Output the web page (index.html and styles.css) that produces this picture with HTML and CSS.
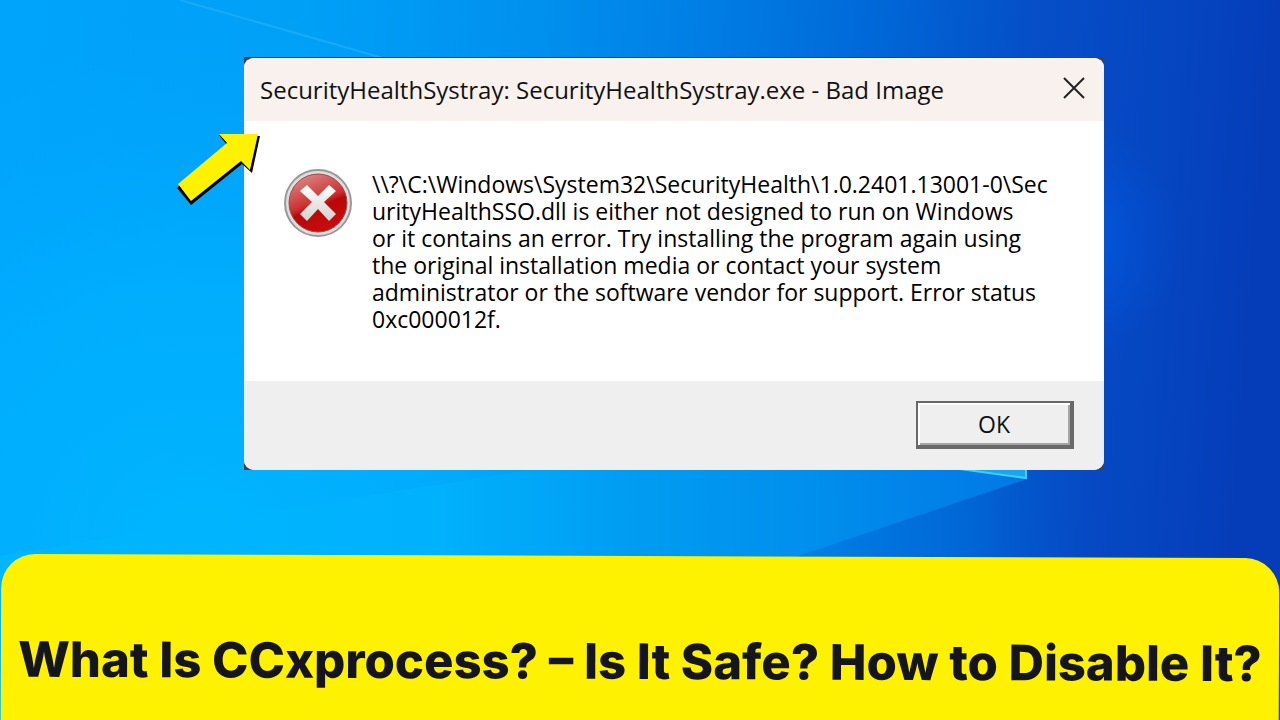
FILE: index.html
```html
<!DOCTYPE html>
<html lang="en">
<head>
    <meta charset="UTF-8">
    <meta name="viewport" content="width=device-width, initial-scale=1.0">
    <title>What Is CCxprocess?</title>
    <link rel="stylesheet" href="styles.css">
</head>
<body>
    <!-- Desktop wallpaper -->
    <svg class="wallpaper" viewBox="0 0 1280 720" preserveAspectRatio="none" aria-hidden="true">
        <defs>
            <linearGradient id="sky" gradientUnits="userSpaceOnUse" x1="0" y1="0" x2="1280" y2="100">
                <stop offset="0" stop-color="#00a4fb"/>
                <stop offset="0.24" stop-color="#00a0f7"/>
                <stop offset="0.42" stop-color="#0090ee"/>
                <stop offset="0.56" stop-color="#007ce4"/>
                <stop offset="0.68" stop-color="#0068d8"/>
                <stop offset="0.8" stop-color="#054fc8"/>
                <stop offset="0.92" stop-color="#0545c0"/>
                <stop offset="1" stop-color="#053cb8"/>
            </linearGradient>
            <radialGradient id="glow" gradientUnits="userSpaceOnUse" cx="200" cy="560" r="540">
                <stop offset="0" stop-color="#00b6ff"/>
                <stop offset="0.5" stop-color="#00b0ff" stop-opacity="0.8"/>
                <stop offset="1" stop-color="#00a8ff" stop-opacity="0"/>
            </radialGradient>
            <linearGradient id="beam" gradientUnits="userSpaceOnUse" x1="0" y1="0" x2="1027" y2="0">
                <stop offset="0" stop-color="#00b6ff"/>
                <stop offset="0.42" stop-color="#00b2fd"/>
                <stop offset="0.62" stop-color="#009cf2"/>
                <stop offset="0.8" stop-color="#008eec"/>
                <stop offset="1" stop-color="#0078e6"/>
            </linearGradient>
            <linearGradient id="shade" gradientUnits="userSpaceOnUse" x1="780" y1="0" x2="1160" y2="0">
                <stop offset="0" stop-color="#0084e8"/>
                <stop offset="0.5" stop-color="#0066d6"/>
                <stop offset="0.85" stop-color="#0550c8" stop-opacity="0"/>
            </linearGradient>
            <radialGradient id="light" gradientUnits="userSpaceOnUse" cx="1050" cy="240" r="130">
                <stop offset="0" stop-color="#0062ee"/>
                <stop offset="1" stop-color="#0055dd" stop-opacity="0"/>
            </radialGradient>
        </defs>
        <rect width="1280" height="720" fill="url(#sky)"/>
        <rect width="1280" height="720" fill="url(#glow)"/>
        <rect width="1280" height="720" fill="url(#light)"/>
        <path d="M780 460 L1160 460 L1160 720 L780 720 Z" fill="url(#shade)"/>
        <path d="M0 556 L590 460 L1027 460 L1027 479 L780 562 L780 720 L0 720 Z" fill="url(#beam)"/>
        <path d="M180 0 L390 60" stroke="#3fb8ff" stroke-opacity="0.4" stroke-width="2" fill="none"/>
        <path d="M960 469 L1026 478 V469" fill="#17a5f5" stroke="#3fd0ff" stroke-width="2"/>
    </svg>

    <main class="desktop">
        <div class="dialog-frame">
            <section class="dialog" role="alertdialog" aria-labelledby="title" aria-describedby="message">
                <header class="titlebar">
                    <h1 id="title">SecurityHealthSystray: SecurityHealthSystray.exe - Bad Image</h1>
                    <button type="button" class="close" aria-label="Close">
                        <svg width="24" height="24" viewBox="0 0 24 24"><path d="M2 2 L22 22 M22 2 L2 22" stroke="#222" stroke-width="2" fill="none"/></svg>
                    </button>
                </header>
                <div class="content">
                    <svg class="error-icon" width="68" height="68" viewBox="0 0 68 68" aria-hidden="true">
                        <defs>
                            <linearGradient id="red" x1="0.2" y1="0" x2="0.6" y2="1">
                                <stop offset="0" stop-color="#e08a8a"/>
                                <stop offset="0.5" stop-color="#cc3030"/>
                                <stop offset="0.6" stop-color="#b80808"/>
                                <stop offset="1" stop-color="#c80c0c"/>
                            </linearGradient>
                            <linearGradient id="cross" x1="0" y1="0" x2="0" y2="1">
                                <stop offset="0" stop-color="#ffffff"/>
                                <stop offset="1" stop-color="#d2d2d2"/>
                            </linearGradient>
                        </defs>
                        <circle cx="34" cy="34" r="33" fill="#dedede" stroke="#999" stroke-width="2"/>
                        <circle cx="34" cy="34" r="29" fill="url(#red)" stroke="#9c4a4a" stroke-width="1"/>
                        <path d="M23 16 L34 27 L45 16 L52 22 L40 33 L52 45 L45 52 L34 40 L23 52 L16 45 L28 33 L16 22 Z" fill="url(#cross)"/>
                    </svg>
                    <p id="message">\\?\C:\Windows\System32\SecurityHealth\1.0.2401.13001-0\Sec<br>urityHealthSSO.dll is either not designed to run on Windows<br>or it contains an error. Try installing the program again using<br>the original installation media or contact your system<br>administrator or the software vendor for support. Error status<br>0xc000012f.</p>
                </div>
                <footer class="actions">
                    <button type="button" class="ok">OK</button>
                </footer>
            </section>
            <!-- Arrow pointing at the dialog title -->
            <svg class="arrow" width="90" height="80" viewBox="0 0 90 80" aria-hidden="true">
                <path d="M45 7 L86 8 L78 45 L68 36 L17 77 L3 60 L53 17 Z" fill="#000"/>
                <path d="M45 6 L84 6 L76 42 L67 33 L17 73 L4 56 L53 15 Z" fill="#fff200"/>
            </svg>
        </div>
    </main>

    <div class="banner">
        <h2>What Is CCxprocess? – Is It Safe? How to Disable It?</h2>
    </div>
</body>
</html>
```
FILE: styles.css
```css
body {
    display: flex;
    flex-direction: column;
    min-height: 100vh;
    margin: 0;
    overflow: hidden;
    background-color: #0088ee;
    font-family: "Open Sans", "Noto Sans", sans-serif;
    color: #111;
}
h1, h2, p {
    margin: 0;
}
.wallpaper {
    position: absolute;
    z-index: -1;
    width: 100%;
    height: 100%;
}
.desktop {
    flex: 1;
    padding: 57px 176px 85px 244px;
}
.dialog-frame {
    position: relative;
    background-color: #40404a;
}
.dialog {
    overflow: hidden;
    border-top: 1px solid #40404a;
    border-radius: 10px;
    background-color: #fff;
}
.titlebar {
    display: flex;
    align-items: center;
    justify-content: space-between;
    height: 63px;
    padding: 0 16px;
    background-color: #f9f1ed;
}
.titlebar h1 {
    font-size: 24px;
    font-weight: 400;
    white-space: nowrap;
}
.close {
    display: flex;
    padding: 0 2px 4px;
    border: none;
    background: none;
    cursor: pointer;
}
.content {
    display: flex;
    align-items: flex-start;
    gap: 20px;
    padding: 48px 40px;
}
.error-icon {
    flex: none;
}
.content p {
    padding-top: 2px;
    font-size: 23px;
    line-height: 27px;
    white-space: nowrap;
    color: #000;
}
.actions {
    display: flex;
    justify-content: flex-end;
    padding: 20px 30px 21px;
    background-color: #efefef;
}
.ok {
    width: 158px;
    height: 48px;
    border: solid #696969;
    border-width: 2px 4px 4px 2px;
    background-color: #efefef;
    box-shadow: inset 2px 2px #fff, inset -2px -2px #a5a5a5;
    font-family: inherit;
    font-size: 23px;
    color: #111;
    cursor: pointer;
}
.arrow {
    position: absolute;
    top: 71px;
    left: -70px;
}
.banner {
    height: 172px;
    margin: 0 1px -8px;
    border-radius: 34px 34px 0 0;
    background-color: #fff200;
    transform: rotate(0.2deg);
}
.banner h2 {
    padding-top: 74px;
    font-family: Inter, sans-serif;
    font-size: 49px;
    font-weight: 800;
    line-height: 64px;
    text-align: center;
    white-space: nowrap;
    color: #15151f;
}
```
